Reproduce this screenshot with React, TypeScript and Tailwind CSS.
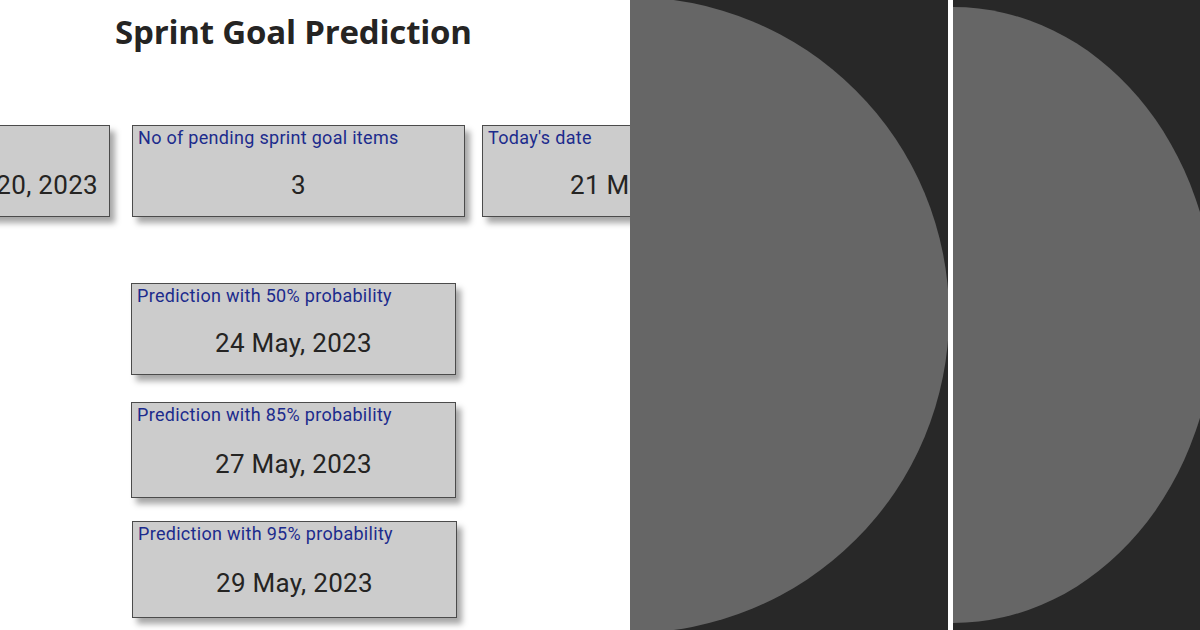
const LABEL = "font-['Roboto',sans-serif] text-[18px] tracking-[0.3px] leading-none text-[#1c2b8c]";
const VALUE = "font-['Roboto',sans-serif] text-[26px] tracking-[0.3px] leading-none text-[#252423]";

function Card({ label, value, className }: { label: string; value: string; className: string }) {
  return (
    <div
      className={`flex shrink-0 flex-col border border-[#4b4b4b] bg-[#cccccc] shadow-[5px_6px_6px_rgba(0,0,0,0.35)] ${className}`}
    >
      <div className={`${LABEL} whitespace-nowrap pl-[5px] pt-[3px]`}>{label}</div>
      <div className="flex flex-1 items-center justify-center pt-[6px]">
        <span className={`${VALUE} whitespace-nowrap`}>{value}</span>
      </div>
    </div>
  );
}

export default function App() {
  return (
    <div className="flex h-[630px] w-[1200px] overflow-hidden bg-white">
      {/* report canvas */}
      <div className="flex h-full w-[630px] shrink-0 flex-col overflow-hidden">
        <h1 className="pl-[115px] pt-[10px] font-['Open_Sans',sans-serif] text-[33px] font-bold leading-[44px] tracking-[-0.2px] text-[#252423]">
          Sprint Goal Prediction
        </h1>

        <div className="mt-[71px] flex">
          {/* first card runs off the left edge of the canvas */}
          <div className="flex w-[110px] shrink-0 justify-end">
            <Card label="Sprint end date" value="Saturday, May 20, 2023" className="h-[92px] px-[11px]" />
          </div>
          <Card label="No of pending sprint goal items" value="3" className="ml-[22px] h-[92px] w-[333px]" />
          <Card label="Today's date" value="21 May, 2023" className="ml-[17px] h-[92px] w-[333px]" />
        </div>

        <div className="mt-[66px] ml-[131px] flex flex-col">
          <Card label="Prediction with 50% probability" value="24 May, 2023" className="h-[92px] w-[325px]" />
          <Card label="Prediction with 85% probability" value="27 May, 2023" className="mt-[27px] h-[96px] w-[325px]" />
          <Card label="Prediction with 95% probability" value="29 May, 2023" className="mt-[23px] ml-px h-[97px] w-[325px]" />
        </div>
      </div>

      {/* chart visuals */}
      <div className="h-full w-[318px] shrink-0 bg-[#282828]">
        <svg width="318" height="630" viewBox="0 0 318 630">
          <ellipse cx="0" cy="315" rx="319" ry="318" fill="#666666" />
        </svg>
      </div>
      <div className="h-full w-[5px] shrink-0 bg-white" />
      <div className="h-full flex-1 bg-[#282828]">
        <svg width="247" height="630" viewBox="0 0 247 630">
          <ellipse cx="0" cy="315" rx="262" ry="308" fill="#666666" />
        </svg>
      </div>
    </div>
  );
}
